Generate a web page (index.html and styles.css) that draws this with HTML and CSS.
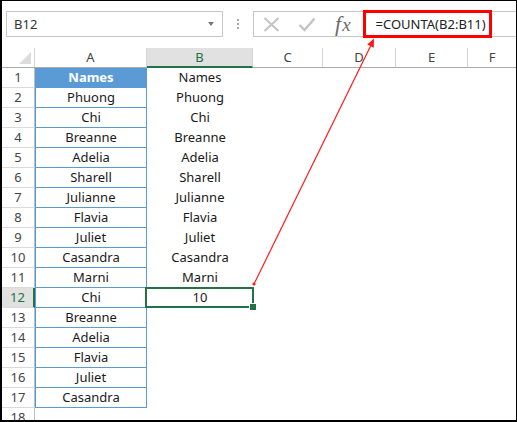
FILE: index.html
```html
<!DOCTYPE html>
<html>
  <head>
    <meta charset="utf-8">
    <title>COUNTA</title>
    <link rel="stylesheet" href="styles.css">
  </head>
  <body>
    <div class="page">
      <div class="toolbar">
        <div class="namebox">
          <span>B12</span>
          <i class="caret"></i>
        </div>
        <div class="dots"><i></i><i></i><i></i></div>
        <div class="fbar">
          <svg class="ico" width="17" height="15" viewBox="0 0 17 15">
            <path d="M1.5 1 L15.5 14 M15.5 1 L1.5 14" stroke="#c3c3c3" stroke-width="2" fill="none"/>
          </svg>
          <svg class="ico chk" width="18" height="15" viewBox="0 0 18 15">
            <path d="M1.5 8 L6.5 13 L16.5 1.5" stroke="#c3c3c3" stroke-width="2.4" fill="none"/>
          </svg>
          <span class="fx">f<span>x</span></span>
          <span class="formula">=COUNTA(B2:B11)</span>
        </div>
      </div>

      <div class="sheet">
        <div class="row head">
          <div class="corner"><i></i></div>
          <div class="ch">A</div>
          <div class="ch sel">B</div>
          <div class="ch">C</div>
          <div class="ch">D</div>
          <div class="ch">E</div>
          <div class="ch last">F</div>
        </div>
        <div class="row"><div class="rh">1</div><div class="a title">Names</div><div class="b">Names</div></div>
        <div class="row"><div class="rh">2</div><div class="a">Phuong</div><div class="b">Phuong</div></div>
        <div class="row"><div class="rh">3</div><div class="a">Chi</div><div class="b">Chi</div></div>
        <div class="row"><div class="rh">4</div><div class="a">Breanne</div><div class="b">Breanne</div></div>
        <div class="row"><div class="rh">5</div><div class="a">Adelia</div><div class="b">Adelia</div></div>
        <div class="row"><div class="rh">6</div><div class="a">Sharell</div><div class="b">Sharell</div></div>
        <div class="row"><div class="rh">7</div><div class="a">Julianne</div><div class="b">Julianne</div></div>
        <div class="row"><div class="rh">8</div><div class="a">Flavia</div><div class="b">Flavia</div></div>
        <div class="row"><div class="rh">9</div><div class="a">Juliet</div><div class="b">Juliet</div></div>
        <div class="row"><div class="rh">10</div><div class="a">Casandra</div><div class="b">Casandra</div></div>
        <div class="row"><div class="rh">11</div><div class="a">Marni</div><div class="b">Marni</div></div>
        <div class="row"><div class="rh cur">12</div><div class="a">Chi</div><div class="b active">10</div></div>
        <div class="row"><div class="rh">13</div><div class="a">Breanne</div><div class="b"></div></div>
        <div class="row"><div class="rh">14</div><div class="a">Adelia</div><div class="b"></div></div>
        <div class="row"><div class="rh">15</div><div class="a">Flavia</div><div class="b"></div></div>
        <div class="row"><div class="rh">16</div><div class="a">Juliet</div><div class="b"></div></div>
        <div class="row"><div class="rh">17</div><div class="a">Casandra</div><div class="b"></div></div>
        <div class="row"><div class="rh">18</div><div class="empty"></div><div class="b"></div></div>
      </div>

      <!-- annotation arrow from B12 to the formula -->
      <svg class="arrow" width="517" height="422" viewBox="0 0 517 422">
        <line x1="254" y1="284" x2="370.6" y2="46" stroke="#ff1a1a" stroke-width="1.2"/>
        <polygon points="374,38.5 373.8,47.8 367.2,44.6" fill="#ff1a1a"/>
        <circle cx="254" cy="284" r="1.6" fill="#ff1a1a"/>
      </svg>
    </div>
  </body>
</html>
```

FILE: styles.css
```css
* {
  margin: 0;
  padding: 0;
  box-sizing: border-box;
}
body {
  background: #fff;
  font-family: "Noto Sans", "Liberation Sans", sans-serif;
  font-size: 13px;
}
.page {
  position: relative;
  width: 517px;
  height: 422px;
  border: 1px solid #000;
  border-left-width: 2px;
  border-bottom-width: 2px;
  overflow: hidden;
  background: #fff;
}

/* top bar */
.toolbar {
  height: 47px;
  display: flex;
  align-items: flex-start;
  padding: 10px 0 0 4px;
}
.namebox {
  width: 217px;
  height: 26px;
  border: 1px solid #c6c6c6;
  display: flex;
  align-items: center;
  justify-content: space-between;
  padding: 0 8px 0 7px;
  color: #333;
}
.caret {
  width: 0;
  height: 0;
  border-left: 3.5px solid transparent;
  border-right: 3.5px solid transparent;
  border-top: 4px solid #777;
}
.dots {
  width: 30px;
  height: 26px;
  display: flex;
  flex-direction: column;
  align-items: center;
  justify-content: center;
  gap: 2px;
}
.dots i {
  width: 2px;
  height: 2px;
  background: #a6a6a6;
}
.fbar {
  flex: 1;
  height: 26px;
  border: 1px solid #c6c6c6;
  border-right: none;
  display: flex;
  align-items: center;
  padding-left: 9px;
}
.ico {
  display: block;
}
.chk {
  margin-left: 18px;
}
.fx {
  margin-left: 19px;
  font-family: "Liberation Serif", serif;
  font-style: italic;
  font-size: 22px;
  color: #6a6a6a;
  line-height: 20px;
  letter-spacing: 1px;
}
.fx span {
  font-size: 19px;
}
.formula {
  margin-left: 11px;
  height: 28px;
  width: 129px;
  border: 3px solid #f00;
  display: flex;
  align-items: center;
  padding-left: 10px;
  color: #222;
  white-space: nowrap;
}

/* grid */
.row {
  display: grid;
  grid-template-columns: 33px 112px 106px 70px 73px 72px 1fr;
  height: 20px;
}
.head {
  height: 20px;
  border-bottom: 1px solid #ababab;
}
.corner {
  display: flex;
  justify-content: flex-end;
  align-items: flex-end;
  padding: 0 3px 3px 0;
  border-right: 1px solid #d4d4d4;
}
.corner i {
  width: 0;
  height: 0;
  border-left: 12px solid transparent;
  border-bottom: 12px solid #dcdcdc;
}
.ch {
  text-align: center;
  line-height: 19px;
  color: #444;
  border-right: 1px solid #d4d4d4;
}
.ch.sel {
  background: #e1e1e1;
  color: #217346;
  border-bottom: 2px solid #217346;
  line-height: 18px;
  margin-bottom: -1px;
  height: 20px;
}
.ch.last {
  border-right: none;
}
.rh {
  text-align: center;
  line-height: 19px;
  color: #444;
  border-right: 1px solid #bdbdbd;
  border-bottom: 1px solid #dadada;
}
.rh.cur {
  background: #e1e1e1;
  color: #217346;
  border-right: 2px solid #217346;
}
.a {
  text-align: center;
  line-height: 19px;
  color: #1a1a1a;
  border-left: 1px solid #5b9bd5;
  border-right: 1px solid #5b9bd5;
  border-bottom: 1px solid #5b9bd5;
}
.a.title {
  background: #5b9bd5;
  color: #fff;
  font-weight: bold;
}
.b {
  text-align: center;
  line-height: 19px;
  color: #1a1a1a;
}
.b.active {
  position: relative;
}
.b.active::before {
  content: "";
  position: absolute;
  top: -1px;
  left: -2px;
  right: -1px;
  bottom: 0;
  border: 2px solid #217346;
}
.b.active::after {
  content: "";
  position: absolute;
  right: -4px;
  bottom: -3px;
  width: 6px;
  height: 6px;
  background: #217346;
  border: 1px solid #fff;
}

.arrow {
  position: absolute;
  left: -2px;
  top: -1px;
  pointer-events: none;
}
```
